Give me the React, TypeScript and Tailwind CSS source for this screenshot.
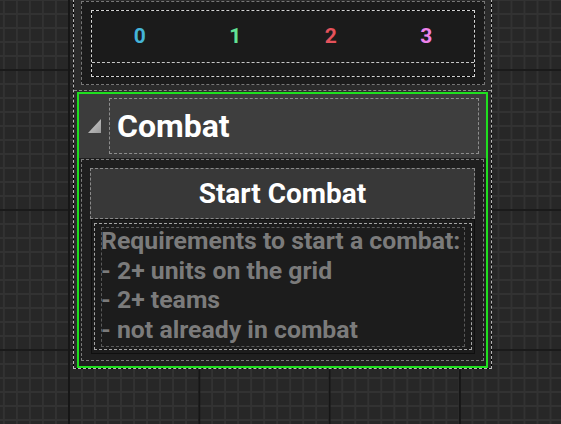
import React from "react";

const nums: { n: string; c: string }[] = [
  { n: "0", c: "text-[#44b4d8]" },
  { n: "1", c: "text-[#62e294]" },
  { n: "2", c: "text-[#e5525b]" },
  { n: "3", c: "text-[#ee82ea]" },
];

export default function App() {
  return (
    <div className="w-[561px] h-[424px] overflow-hidden bg-[#272727] bg-[linear-gradient(to_right,#161616_2px,transparent_2px),linear-gradient(to_bottom,#1a1a1a_2px,transparent_2px),linear-gradient(to_right,#323232_2px,transparent_2px),linear-gradient(to_bottom,#323232_2px,transparent_2px)] bg-[size:130.3px_140px,130.3px_140px,13.03px_14px,13.03px_14px] bg-[position:68px_69px] font-['Roboto','Noto_Sans',sans-serif]">
      <div className="ml-[73px] -mt-px w-[419px] border border-dashed border-[#b8b8b8] bg-black">
        <div className="flex flex-col bg-[#2b2b2b]">
          {/* top section */}
          <div className="mt-px ml-[7px] w-[404px] h-[84px] border border-dashed border-[#777777] bg-[#1b1b1b] pt-[8px] pl-[9px]">
            <div className="w-[384px] h-[67px] border border-dashed border-[#d4d4d4] bg-black">
              <div className="flex flex-col h-full bg-[#1b1b1b]">
                <div className="grid grid-cols-4 h-[51px] items-center">
                  {nums.map((x) => (
                    <div
                      key={x.n}
                      className={`text-center text-[21px] font-bold leading-none ${x.c}`}
                    >
                      {x.n}
                    </div>
                  ))}
                </div>
                <div className="border-t border-dashed border-[#c8c8c8]" />
                <div className="h-[13px]" />
              </div>
            </div>
          </div>

          {/* combat section */}
          <div className="mt-[5px] border-t border-dashed border-[#8a8a8a] pt-px pl-[3px]">
            <div className="w-[411px] border-2 border-[#1fe01f] flex flex-col">
              {/* header */}
              <div className="h-[64px] bg-[#3c3c3c] flex items-center pl-[9px] pr-[7px]">
                <svg width="13" height="14" viewBox="0 0 13 14" className="shrink-0 -mt-px">
                  <defs>
                    <linearGradient id="tri" x1="0" y1="0" x2="1" y2="1">
                      <stop offset="0" stopColor="#d0d0d0" />
                      <stop offset="1" stopColor="#9a9a9a" />
                    </linearGradient>
                  </defs>
                  <polygon points="13,0 13,14 0,14" fill="url(#tri)" />
                </svg>
                <div className="ml-[8px] w-[370px] h-[56px] border border-dashed border-[#8e8e8e] bg-[#3e3e3e] flex items-center pl-[7px]">
                  <span className="text-[32px] font-bold text-white leading-none">Combat</span>
                </div>
              </div>

              {/* body */}
              <div className="h-[208px] bg-[#1f1f1f] pl-[2px] pt-px">
                <div className="w-[403px] h-[202px] border border-dashed border-[#7c7c7c] pt-[8px] flex flex-col">
                  <div className="ml-[8px] w-[385px] h-[51px] border border-dashed border-[#8a8a8a] bg-[#383838] flex items-center justify-center">
                    <span className="text-[28px] font-bold text-white leading-none">Start Combat</span>
                  </div>
                  <div className="ml-[9px] w-[384px] h-[135px] border border-[#0f0f0f] bg-[#1c1c1c] pl-[2px] pt-[3px]">
                    <div className="w-[378px] h-[127px] border border-dashed border-[#a6a6a6] bg-[#1c1c1c] pl-[6px] pt-[3px]">
                      <div className="w-[364px] h-[120px] border border-dashed border-[#5a5a5a]">
                        <div className="text-[24.8px] font-bold leading-[29.5px] text-[#7b7b7b] whitespace-nowrap -mt-[2px] -ml-px">
                          <div>Requirements to start a combat:</div>
                          <div>- 2+ units on the grid</div>
                          <div>- 2+ teams</div>
                          <div>- not already in combat</div>
                        </div>
                      </div>
                    </div>
                  </div>
                </div>
              </div>
            </div>
          </div>
        </div>
      </div>
    </div>
  );
}
